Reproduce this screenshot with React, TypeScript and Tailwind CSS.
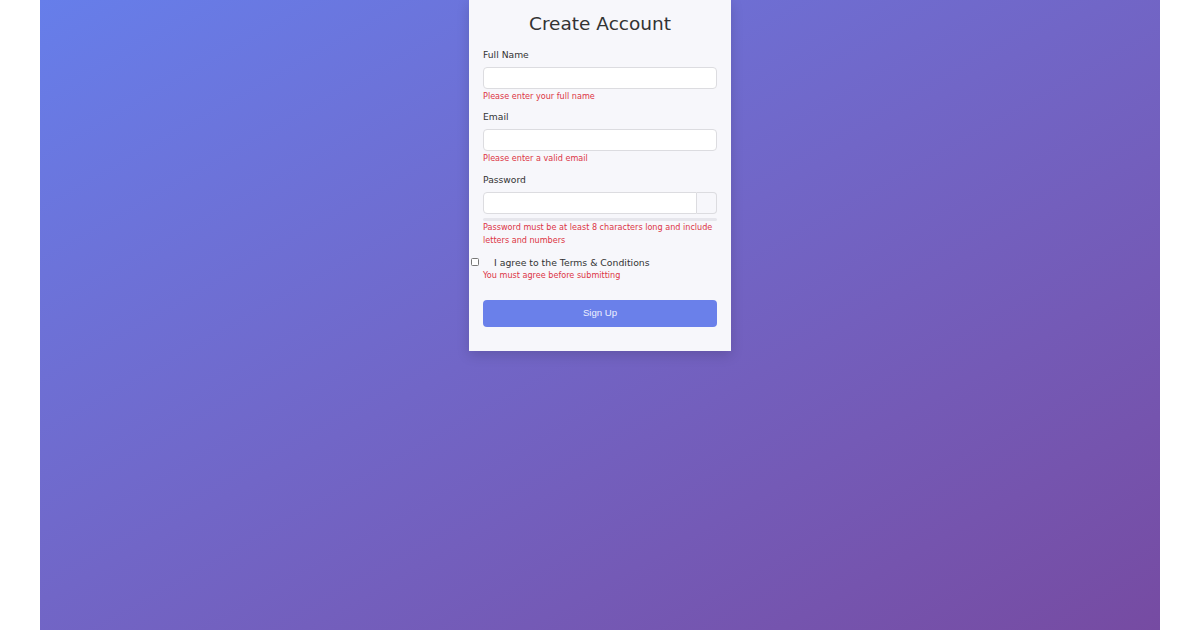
export default function App() {
  return (
    <div className="w-[1200px] h-[630px] bg-white flex justify-center" style={{ fontFamily: '"DejaVu Sans", sans-serif' }}>
      <div className="w-[1120px] h-[630px] bg-gradient-to-br from-[#667eea] to-[#764ba2]">
        <div className="w-[262px] mx-auto bg-[#f7f7fb] px-[14px] pt-[12px] pb-[24px] shadow-[0_4px_12px_rgba(0,0,0,0.15)]">
          <h1 className="text-center text-[18.5px] leading-[24px] text-[#333] font-normal mb-[12px]">
            Create Account
          </h1>

          <Field label="Full Name" error="Please enter your full name" />
          <div className="h-[8px]" />
          <Field label="Email" error="Please enter a valid email" />
          <div className="h-[9px]" />

          <label className="block text-[9.2px] leading-[13px] text-[#333] mb-[6px]">Password</label>
          <div className="flex h-[22px]">
            <div className="flex-1 bg-white border border-[#dcdce0] rounded-l-[4px]" />
            <div className="w-[20px] bg-[#f7f7fb] border border-l-0 border-[#dcdce0] rounded-r-[4px]" />
          </div>
          <div className="mt-[4px] h-[3px] bg-[#e6e6ec] rounded-full" />
          <p className="text-[8.1px] leading-[12.5px] text-[#dc3545]">
            Password must be at least 8 characters long and include letters and numbers
          </p>

          <div className="mt-[9.5px] flex items-center h-[13px] ml-[-12px]">
            <span className="w-[8px] h-[8px] border border-[#777] rounded-[1.5px] bg-white" />
            <span className="ml-[15px] text-[9.3px] leading-[13px] text-[#333]">
              I agree to the Terms &amp; Conditions
            </span>
          </div>
          <p className="text-[8.1px] leading-[12px] text-[#dc3545] pt-[0.5px]">You must agree before submitting</p>

          <button
            type="button"
            className="mt-[18.5px] w-full h-[27px] rounded-[4px] bg-[#6a80ea] text-[9.6px] text-[#eef0ff]"
            style={{ fontFamily: '"Liberation Sans", Arial, sans-serif' }}
          >
            Sign Up
          </button>
        </div>
      </div>
    </div>
  );
}

function Field({ label, error }: { label: string; error: string }) {
  return (
    <div>
      <label className="block text-[9.2px] leading-[13px] text-[#333] mb-[6px]">{label}</label>
      <div className="h-[22px] bg-white border border-[#dcdce0] rounded-[4px]" />
      <p className="text-[8.1px] leading-[12.5px] text-[#dc3545] pt-[0.5px]">{error}</p>
    </div>
  );
}
